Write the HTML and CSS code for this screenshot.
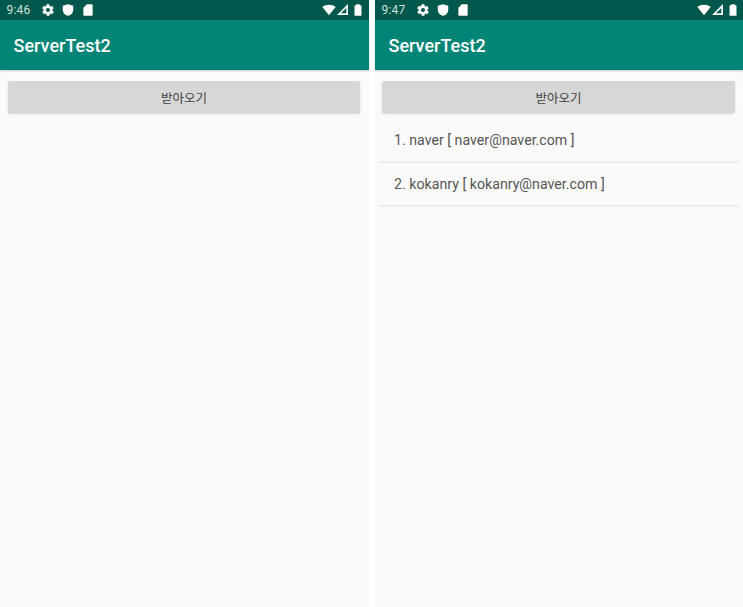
FILE: index.html
```html
<!DOCTYPE html>
<html lang="ko">
<head>
  <meta charset="UTF-8" />
  <title>ServerTest2</title>
  <link rel="stylesheet" href="styles.css">
</head>
<body>
  <svg class="defs" width="0" height="0">
    <symbol id="gear" viewBox="0 0 24 24"><path d="M19.4 13c.1-.3.1-.7.1-1s0-.7-.1-1l2.100-1.600c.2-.2.2-.4.1-.6l-2-3.500c-.1-.2-.4-.3-.6-.2l-2.500 1c-.5-.4-1.100-.7-1.700-1l-.4-2.600c0-.3-.2-.5-.5-.5h-4c-.3 0-.5.2-.5.4l-.4 2.700c-.6.2-1.100.6-1.700 1l-2.500-1c-.2-.1-.5 0-.6.2l-2 3.500c-.1.2-.1.4.1.6L4.600 11c0 .3-.1.7-.1 1s0 .7.1 1l-2.100 1.600c-.2.2-.2.4-.1.6l2 3.500c.1.2.4.3.6.2l2.500-1c.5.4 1.100.7 1.700 1l.4 2.600c0 .3.2.5.5.5h4c.3 0 .5-.2.5-.4l.4-2.700c.6-.2 1.100-.6 1.700-1l2.500 1c.2.1.5 0 .6-.2l2-3.500c.1-.2.1-.4-.1-.6zM12 15.500a3.500 3.500 0 1 1 0-7 3.500 3.500 0 0 1 0 7z"/></symbol>
    <symbol id="shield" viewBox="0 0 24 24"><path d="M12 2 3 4.500v7c0 5 3.800 9.300 9 10.500 5.200-1.200 9-5.500 9-10.500v-7z"/></symbol>
    <symbol id="sd" viewBox="0 0 24 24"><path d="M18 2h-8L4 8v12c0 1.100.9 2 2 2h12c1.100 0 2-.9 2-2V4c0-1.100-.9-2-2-2z"/></symbol>
    <symbol id="wifi" viewBox="0 0 24 24"><path d="M12 21 .5 7C3.600 4.500 7.600 3 12 3s8.400 1.500 11.500 4z"/></symbol>
    <symbol id="signal" viewBox="0 0 24 24"><path fill-rule="evenodd" d="M22 2v20H2zM19 9 9 19h10z"/></symbol>
    <symbol id="battery" viewBox="0 0 24 24"><path d="M9 2h6v2h2c.6 0 1 .4 1 1v16c0 .6-.4 1-1 1H7c-.6 0-1-.4-1-1V5c0-.6.4-1 1-1h2z"/></symbol>
  </svg>

  <div class="screens">
    <div class="phone">
      <div class="status-bar">
        <span class="time">9:46</span>
        <svg class="ic"><use href="#gear"/></svg>
        <svg class="ic"><use href="#shield"/></svg>
        <svg class="ic"><use href="#sd"/></svg>
        <span class="spacer"></span>
        <svg class="ic-wifi"><use href="#wifi"/></svg>
        <svg class="ic-signal"><use href="#signal"/></svg>
        <svg class="ic-battery"><use href="#battery"/></svg>
      </div>
      <div class="toolbar">ServerTest2</div>
      <div class="content">
        <button class="fetch">받아오기</button>
      </div>
    </div>

    <div class="phone">
      <div class="status-bar">
        <span class="time">9:47</span>
        <svg class="ic"><use href="#gear"/></svg>
        <svg class="ic"><use href="#shield"/></svg>
        <svg class="ic"><use href="#sd"/></svg>
        <span class="spacer"></span>
        <svg class="ic-wifi"><use href="#wifi"/></svg>
        <svg class="ic-signal"><use href="#signal"/></svg>
        <svg class="ic-battery"><use href="#battery"/></svg>
      </div>
      <div class="toolbar">ServerTest2</div>
      <div class="content">
        <button class="fetch">받아오기</button>
        <ul class="list">
          <li>1. naver [ naver@naver.com ]</li>
          <li>2. kokanry [ kokanry@naver.com ]</li>
        </ul>
      </div>
    </div>
  </div>
</body>
</html>
```

FILE: styles.css
```css
html, body {
  height: 100%;
}
body {
  margin: 0;
  background: #fff;
  font-family: Roboto, "Noto Sans CJK KR", sans-serif;
  overflow: hidden;
}
.defs {
  display: none;
}
.screens {
  display: grid;
  grid-template-columns: 368.5px 368px;
  justify-content: space-between;
  height: 607px;
}
.phone {
  display: flex;
  flex-direction: column;
  background: #fafafa;
}
.status-bar {
  display: flex;
  align-items: center;
  height: 20px;
  padding: 0 3.5px 0 6.5px;
  background: #00574b;
  color: #cfe3df;
  fill: #fff;
}
.time {
  width: 34px;
  font-size: 12px;
  letter-spacing: 0.2px;
}
.ic {
  width: 14px;
  height: 14px;
  margin-right: 6px;
}
.spacer {
  flex: 1;
}
.ic-wifi {
  width: 14px;
  height: 14px;
  margin-bottom: 1px;
}
.ic-signal {
  width: 13px;
  height: 13px;
  margin-right: 2px;
  margin-bottom: 1px;
}
.ic-battery {
  width: 14px;
  height: 14px;
  margin-bottom: 1px;
}
.toolbar {
  height: 50px;
  padding-left: 13.5px;
  background: #008577;
  color: #fff;
  font-size: 18px;
  font-weight: 500;
  line-height: 52px;
  box-shadow: 0 1px 2px rgba(0, 0, 0, 0.2);
}
.content {
  display: flex;
  flex-direction: column;
  padding: 11px 4px 0 5px;
}
.fetch {
  height: 32px;
  margin: 0 4px 0 2px;
  border: none;
  border-radius: 2px;
  background: #d6d7d7;
  color: #444;
  font-family: inherit;
  font-size: 12.5px;
  box-shadow: 0 1px 2px rgba(0, 0, 0, 0.15);
}
.phone:first-child .fetch {
  margin: 0 4.5px 0 3px;
}
.list {
  margin: 6px 0 0;
  padding: 0;
  list-style: none;
}
.list li {
  height: 42px;
  padding-left: 14px;
  border-bottom: 2px solid #ececec;
  color: #555;
  font-size: 14.2px;
  line-height: 42px;
}
```
